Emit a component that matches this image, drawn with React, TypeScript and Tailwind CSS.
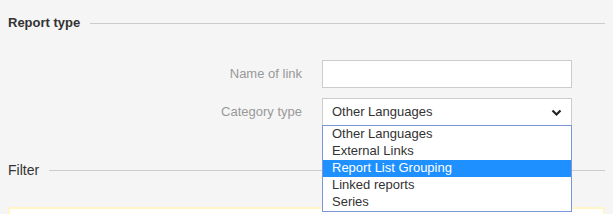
const OPTIONS = ["Other Languages", "External Links", "Report List Grouping", "Linked reports", "Series"];

function SectionHeading({ title, bold }: { title: string; bold?: boolean }) {
  return (
    <div className="flex items-center h-5 gap-[10px]">
      <span className={`leading-5 text-[#333] ${bold ? "font-bold text-[13px]" : "text-[14px]"}`}>{title}</span>
      <div className="flex-1 h-px bg-[#cccccc]" />
    </div>
  );
}

export default function App() {
  const selected = 2;
  return (
    <div
      className="w-[613px] h-[214px] overflow-hidden bg-[#f5f5f5] px-2 pt-[13px]"
      style={{ fontFamily: '"Liberation Sans", Arial, sans-serif' }}
    >
      <SectionHeading title="Report type" bold />

      <div className="mt-[27px] flex flex-col gap-[10px]">
        <div className="flex items-center">
          <label className="w-[294px] text-right text-[13px] text-[#999]">Name of link</label>
          <div className="ml-5 w-[250px] h-7 bg-white border border-[#cccccc]" />
        </div>
        <div className="flex items-center">
          <label className="w-[294px] text-right text-[13px] text-[#999]">Category type</label>
          <div className="ml-5 relative w-[250px]">
            <div className="h-7 bg-white border border-[#cccccc] flex items-center pl-[9px] pr-[9px]">
              <span className="flex-1 text-[13px] text-[#333]">Other Languages</span>
              <svg width="11" height="8" viewBox="0 0 11 8" className="mt-px">
                <path d="M1.5 1.5 L5.5 5.5 L9.5 1.5" fill="none" stroke="#222" strokeWidth="2.2" />
              </svg>
            </div>
            <ul className="absolute left-0 top-[27px] w-[250px] bg-white border border-[#7a96d6] z-10">
              {OPTIONS.map((o, i) => (
                <li
                  key={o}
                  className={`h-[17px] leading-[16px] pl-[9px] text-[13px] ${
                    i === selected ? "bg-[#1e90ff] text-white" : "text-[#333]"
                  }`}
                >
                  {o}
                </li>
              ))}
            </ul>
          </div>
        </div>
      </div>

      <div className="mt-[34px]">
        <SectionHeading title="Filter" />
      </div>

      <div className="mt-[27px] h-10 bg-white border-2 border-[#fff5c8]" />
    </div>
  );
}
